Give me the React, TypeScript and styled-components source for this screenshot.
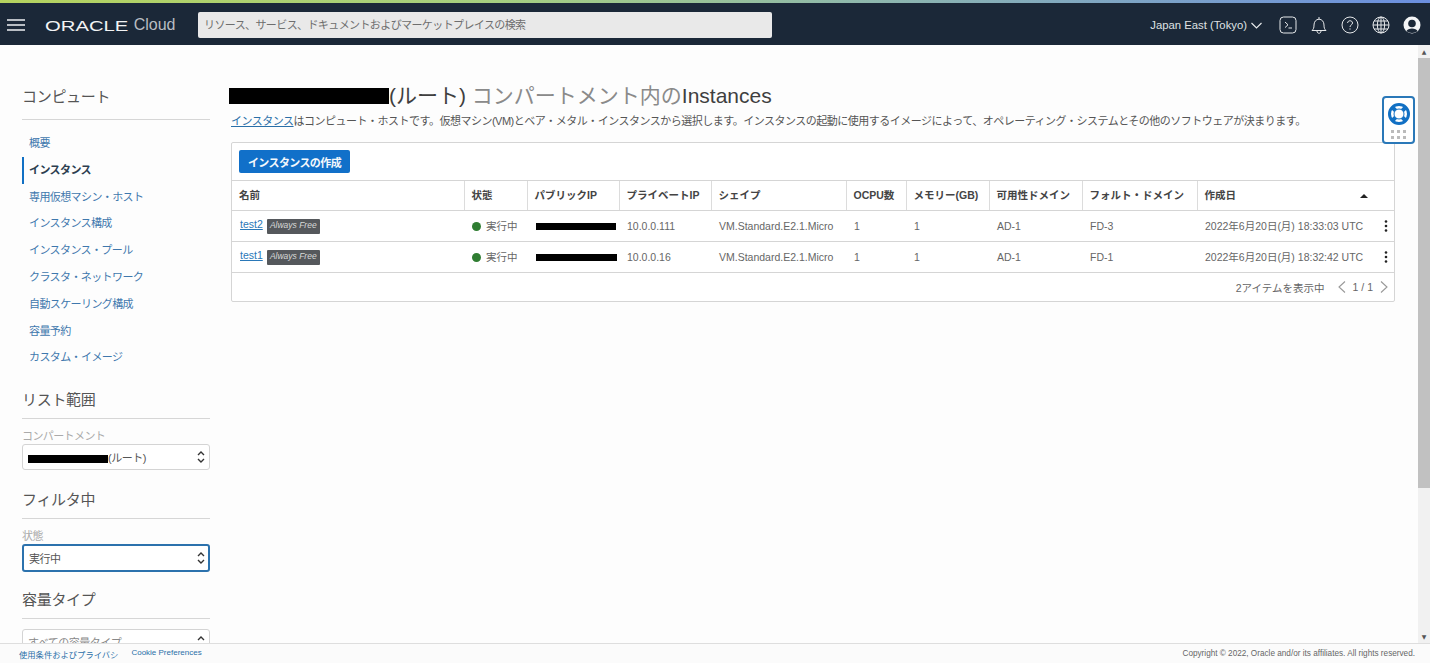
import {FC} from 'react';
import styled, {createGlobalStyle} from 'styled-components';

const FONT = `"Liberation Sans", "Noto Sans CJK JP", sans-serif`;

const navItems = [
  '概要',
  'インスタンス',
  '専用仮想マシン・ホスト',
  'インスタンス構成',
  'インスタンス・プール',
  'クラスタ・ネットワーク',
  '自動スケーリング構成',
  '容量予約',
  'カスタム・イメージ',
];

const columns = [
  {label: '名前', width: 232},
  {label: '状態', width: 63},
  {label: 'パブリックIP', width: 92},
  {label: 'プライベートIP', width: 92},
  {label: 'シェイプ', width: 135},
  {label: 'OCPU数', width: 60},
  {label: 'メモリー(GB)', width: 83},
  {label: '可用性ドメイン', width: 93},
  {label: 'フォルト・ドメイン', width: 115},
  {label: '作成日', width: 198},
];

const instances = [
  {name: 'test2', ip: '10.0.0.111', fd: 'FD-3', created: '2022年6月20日(月) 18:33:03 UTC', ipBar: 80},
  {name: 'test1', ip: '10.0.0.16', fd: 'FD-1', created: '2022年6月20日(月) 18:32:42 UTC', ipBar: 81},
];

const Chevrons: FC = () => (
  <svg width="8" height="14" viewBox="0 0 8 14" fill="none" stroke="#333" strokeWidth="1.4">
    <path d="M1 5l3-3 3 3M1 9l3 3 3-3" />
  </svg>
);

const App: FC = () => (
  <Page>
    <GlobalStyle />
    <Rainbow />
    <Header>
      <Burger viewBox="0 0 18 12" width="18" height="12">
        <path d="M0 1h18M0 6h18M0 11h18" stroke="#eef0f2" strokeWidth="1.6" />
      </Burger>
      <Logo>
        <LogoMark>ORACLE</LogoMark>
        <LogoCloud>Cloud</LogoCloud>
      </Logo>
      <Search>リソース、サービス、ドキュメントおよびマーケットプレイスの検索</Search>
      <HeaderRight>
        <Region>
          Japan East (Tokyo)
          <svg width="11" height="7" viewBox="0 0 11 7" fill="none" stroke="#e6e8ea" strokeWidth="1.2">
            <path d="M.5 1l5 5 5-5" />
          </svg>
        </Region>
        <HeaderIcons>
          <svg width="18" height="18" viewBox="0 0 18 18" fill="none" stroke="#e6e8ea" strokeWidth="1">
            <rect x="1" y="1" width="16" height="16" rx="3.5" />
            <path d="M6 6l3 2.8L6 11.6M9.5 12H13" />
          </svg>
          <svg width="18" height="18" viewBox="-1 0 18 18" fill="none" stroke="#e6e8ea" strokeWidth="1">
            <path d="M1 14.5c1.500-1.500 2-2.500 2-5.500 0-3.200 2-5.800 5-5.800s5 2.600 5 5.800c0 3 .5 4 2 5.500zM8 3.200V1M6 15c0 3 4 3 4 0" />
          </svg>
          <svg width="18" height="18" viewBox="0 0 18 18" fill="none" stroke="#e6e8ea" strokeWidth="1">
            <circle cx="9" cy="9" r="8" />
            <path d="M6.600 7c0-3 4.900-3 4.900 0 0 2-2.500 1.800-2.500 4" />
            <path d="M9 12.400v1.200" />
          </svg>
          <svg width="18" height="18" viewBox="0 0 18 18" fill="none" stroke="#e6e8ea" strokeWidth="1">
            <circle cx="9" cy="9" r="8" />
            <ellipse cx="9" cy="9" rx="3.6" ry="8" />
            <path d="M9 1v16M1 9h16M2 5h14M2 13h14" />
          </svg>
          <svg width="18" height="18" viewBox="0 0 18 18">
            <circle cx="9" cy="9" r="8.5" fill="#f4f5f6" />
            <circle cx="9" cy="7.5" r="3.8" fill="#1b2838" />
            <path d="M3.500 15c1-3.500 10-3.500 11 0-2 2.500-9 2.500-11 0z" fill="#1b2838" />
          </svg>
        </HeaderIcons>
      </HeaderRight>
    </Header>
    <Body>
      <Sidebar>
        <SideHeading $height={33}>コンピュート</SideHeading>
        <NavList>
          {navItems.map((item) => (
            <NavItem key={item} $active={item === 'インスタンス'}>
              {item}
            </NavItem>
          ))}
        </NavList>
        <SideHeading $gap={19}>リスト範囲</SideHeading>
        <FieldLabel>コンパートメント</FieldLabel>
        <SelectBox>
          <span>
            <SelectRedaction />
            (ルート)
          </span>
          <Chevrons />
        </SelectBox>
        <SideHeading $gap={20}>フィルタ中</SideHeading>
        <FieldLabel>状態</FieldLabel>
        <SelectBox $focused>
          <span>実行中</span>
          <Chevrons />
        </SelectBox>
        <SideHeading $gap={18}>容量タイプ</SideHeading>
        <SelectBox $gapTop={10} $muted>
          <span>すべての容量タイプ</span>
          <Chevrons />
        </SelectBox>
      </Sidebar>
      <Content>
        <Title>
          <TitleRedaction />
          <TitleDark>(ルート)</TitleDark> コンパートメント内の<TitleDark>Instances</TitleDark>
        </Title>
        <Intro>
          <IntroLink>インスタンス</IntroLink>
          はコンピュート・ホストです。仮想マシン(VM)とベア・メタル・インスタンスから選択します。インスタンスの起動に使用するイメージによって、オペレーティング・システムとその他のソフトウェアが決まります。
        </Intro>
        <Panel>
          <Toolbar>
            <CreateButton>インスタンスの作成</CreateButton>
          </Toolbar>
          <Table>
            <colgroup>
              {columns.map((col) => (
                <col key={col.label} width={col.width} />
              ))}
            </colgroup>
            <thead>
              <tr>
                {columns.map((col) => (
                  <Th key={col.label}>
                    {col.label}
                    {col.label === '作成日' && <SortArrow />}
                  </Th>
                ))}
              </tr>
            </thead>
            <tbody>
              {instances.map((row) => (
                <tr key={row.name}>
                  <Td>
                    <NameLink>{row.name}</NameLink>
                    <FreeBadge>Always Free</FreeBadge>
                  </Td>
                  <Td>
                    <StatusDot />
                    実行中
                  </Td>
                  <Td>
                    <IpRedaction style={{width: row.ipBar}} />
                  </Td>
                  <Td>{row.ip}</Td>
                  <Td>VM.Standard.E2.1.Micro</Td>
                  <Td>1</Td>
                  <Td>1</Td>
                  <Td>AD-1</Td>
                  <Td>{row.fd}</Td>
                  <DateCell>
                    {row.created}
                    <KebabIcon viewBox="0 0 4 12" width="4" height="12">
                      <circle cx="2" cy="1.5" r="1.3" />
                      <circle cx="2" cy="6" r="1.3" />
                      <circle cx="2" cy="10.5" r="1.3" />
                    </KebabIcon>
                  </DateCell>
                </tr>
              ))}
            </tbody>
          </Table>
          <Pager>
            <span>2アイテムを表示中</span>
            <svg width="8" height="12" viewBox="0 0 8 12" fill="none" stroke="#999" strokeWidth="1.1">
              <path d="M7 .5L1 6l6 5.500" />
            </svg>
            <span>1 / 1</span>
            <svg width="8" height="12" viewBox="0 0 8 12" fill="none" stroke="#999" strokeWidth="1.1">
              <path d="M1 .5L7 6l-6 5.500" />
            </svg>
          </Pager>
        </Panel>
      </Content>
      <HelpWidget>
        <svg width="24" height="24" viewBox="0 0 24 24" fill="none">
          <circle cx="12" cy="12" r="9.5" stroke="#1170c4" strokeWidth="3" />
          <path d="M5 5l4 4M19 5l-4 4M5 19l4-4M19 19l-4-4" stroke="#1170c4" strokeWidth="4" />
          <circle cx="12" cy="12" r="5" fill="#fff" stroke="#1170c4" strokeWidth="1" />
        </svg>
        <HelpDots>
          {Array.from({length: 6}).map((_, i) => (
            <i key={i} />
          ))}
        </HelpDots>
      </HelpWidget>
      <Scrollbar>
        <ScrollArrow>▲</ScrollArrow>
        <ScrollThumb />
        <ScrollArrow>▼</ScrollArrow>
      </Scrollbar>
    </Body>
    <Footer>
      <FooterLinks>
        <span>使用条件およびプライバシ</span>
        <CookieLink>Cookie Preferences</CookieLink>
      </FooterLinks>
      <Copyright>Copyright © 2022, Oracle and/or its affiliates. All rights reserved.</Copyright>
    </Footer>
  </Page>
);

const GlobalStyle = createGlobalStyle`
  html, body {
    margin: 0;
    height: 100%;
    overflow: hidden;
    background: #fcfcfc;
  }
  * { box-sizing: border-box; }
`;

const Page = styled.div`
  width: 1430px;
  height: 663px;
  display: flex;
  flex-direction: column;
  font-family: ${FONT};
  color: #444;
  overflow: hidden;
`;

const Rainbow = styled.div`
  height: 3px;
  flex: none;
  background: linear-gradient(90deg, #b5d35f 0%, #a6cf80 35%, #8fb8ac 60%, #6b8fe0 100%);
`;

const Header = styled.header`
  height: 42px;
  flex: none;
  display: flex;
  align-items: center;
  background: #1b2838;
  padding: 2px 9px 0 7px;
`;

const Burger = styled.svg`
  flex: none;
  margin-right: 20px;
`;

const Logo = styled.div`
  width: 153px;
  display: flex;
  align-items: center;
  gap: 5px;
  flex: none;
`;

const LogoMark = styled.span`
  font-size: 15px;
  color: #f2f3f4;
  transform: scaleX(1.35);
  transform-origin: left center;
  margin-right: 22px;
`;

const LogoCloud = styled.span`
  font-size: 16px;
  color: #b9bdc2;
`;

const Search = styled.div`
  width: 574px;
  height: 26px;
  flex: none;
  background: #e9e9e9;
  border-radius: 2px;
  padding: 0 6px;
  font-size: 11px;
  letter-spacing: -0.6px;
  line-height: 26px;
  color: #6e6e6e;
`;

const HeaderRight = styled.div`
  margin-left: auto;
  display: flex;
  align-items: center;
  gap: 17px;
`;

const Region = styled.div`
  display: flex;
  align-items: center;
  gap: 4px;
  font-size: 11.3px;
  color: #dfe1e3;
`;

const HeaderIcons = styled.div`
  display: flex;
  align-items: center;
  gap: 13px;
`;

const Body = styled.div`
  position: relative;
  flex: 1;
  min-height: 0;
  display: flex;
  overflow: hidden;
  background: #fdfdfd;
`;

const Sidebar = styled.aside`
  width: 231px;
  flex: none;
  padding: 42px 21px 0 22px;
`;

const SideHeading = styled.h3<{$gap?: number; $height?: number}>`
  margin: ${({$gap}) => $gap ?? 0}px 0 0;
  height: ${({$height}) => $height ?? 29}px;
  font-size: 15px;
  letter-spacing: -0.3px;
  line-height: 20px;
  font-weight: 400;
  color: #555;
  border-bottom: 1px solid #d6d6d6;
`;

const NavList = styled.ul`
  list-style: none;
  margin: 10px 0 0;
  padding: 0;
`;

const NavItem = styled.li<{$active?: boolean}>`
  height: 26.8px;
  line-height: 26.8px;
  padding-left: ${({$active}) => ($active ? 5 : 7)}px;
  font-size: 11px;
  letter-spacing: -0.6px;
  color: ${({$active}) => ($active ? '#2c3e50' : '#3f78ad')};
  font-weight: ${({$active}) => ($active ? 700 : 400)};
  border-left: ${({$active}) => ($active ? '2px solid #1170c4' : 'none')};
`;

const FieldLabel = styled.div`
  margin-top: 10px;
  font-size: 11px;
  letter-spacing: -0.6px;
  line-height: 15px;
  color: #aaa;
`;

const SelectBox = styled.div<{$focused?: boolean; $muted?: boolean; $gapTop?: number}>`
  margin-top: ${({$gapTop}) => $gapTop ?? 0}px;
  height: ${({$focused}) => ($focused ? 28 : 26)}px;
  display: flex;
  align-items: center;
  justify-content: space-between;
  padding: 0 ${({$focused}) => ($focused ? 3 : 4)}px 0 5px;
  font-size: 11px;
  letter-spacing: -0.5px;
  color: ${({$muted}) => ($muted ? '#888' : '#555')};
  background: #fff;
  border-radius: 3px;
  border: ${({$focused}) => ($focused ? '2px solid #2c72ad' : '1px solid #d4d4d4')};
`;

const SelectRedaction = styled.i`
  display: inline-block;
  width: 80px;
  height: 8px;
  background: #000;
  vertical-align: -1px;
`;

const Content = styled.main`
  flex: 1;
  min-width: 0;
  padding-top: 38px;
`;

const Title = styled.h1`
  margin: 0;
  height: 26px;
  font-size: 21px;
  line-height: 26px;
  font-weight: 400;
  color: #8a8a8a;
  white-space: nowrap;
`;

const TitleRedaction = styled.i`
  display: inline-block;
  width: 160px;
  height: 16px;
  margin-left: -2px;
  background: #000;
  vertical-align: -1px;
`;

const TitleDark = styled.span`
  color: #3f3f3f;
`;

const Intro = styled.p`
  margin: 4px 0 0;
  font-size: 11px;
  letter-spacing: -0.5px;
  line-height: 16px;
  color: #555;
  white-space: nowrap;
`;

const IntroLink = styled.a`
  color: #2a6fa8;
  text-decoration: underline;
`;

const Panel = styled.section`
  width: 1164px;
  margin-top: 13px;
  background: #fff;
  border: 1px solid #d5d5d5;
  border-radius: 2px;
`;

const Toolbar = styled.div`
  height: 37px;
  padding: 7px 7px 0;
`;

const CreateButton = styled.button`
  height: 23px;
  width: 111px;
  padding: 0;
  border: none;
  border-radius: 2px;
  background: #1170c9;
  color: #f4f8fc;
  font-family: ${FONT};
  font-size: 11px;
  letter-spacing: -0.6px;
  font-weight: 700;
`;

const Table = styled.table`
  width: 1163px;
  table-layout: fixed;
  border-collapse: collapse;
`;

const Th = styled.th`
  position: relative;
  height: 30px;
  padding: 0 0 2px 7px;
  text-align: left;
  font-size: 10.5px;
  font-weight: 700;
  white-space: nowrap;
  color: #444;
  border-top: 1px solid #d5d5d5;
  border-bottom: 1px solid #d5d5d5;
  & + & {
    border-left: 1px solid #dcdcdc;
  }
`;

const SortArrow = styled.i`
  position: absolute;
  right: 27px;
  top: 13px;
  border-left: 4px solid transparent;
  border-right: 4px solid transparent;
  border-bottom: 4px solid #222;
`;

const Td = styled.td`
  height: 31px;
  padding: 0 0 1px 8px;
  font-size: 10.5px;
  color: #666;
  white-space: nowrap;
  border-bottom: 1px solid #d5d5d5;
`;

const DateCell = styled(Td)`
  position: relative;
`;

const KebabIcon = styled.svg`
  position: absolute;
  right: 7px;
  top: 9px;
  fill: #222;
`;

const NameLink = styled.a`
  font-size: 10.5px;
  color: #2a78b8;
  text-decoration: underline;
`;

const FreeBadge = styled.span`
  display: inline-block;
  margin-left: 4px;
  width: 53px;
  height: 15px;
  line-height: 13px;
  text-align: center;
  font-size: 8.5px;
  font-style: italic;
  color: #d8d8d8;
  background: #55585c;
  border-radius: 1px;
`;

const StatusDot = styled.i`
  display: inline-block;
  width: 9px;
  height: 9px;
  margin-right: 5px;
  border-radius: 50%;
  background: #2f7d32;
  vertical-align: -1px;
`;

const IpRedaction = styled.i`
  display: inline-block;
  height: 7px;
  margin-left: 1px;
  background: #000;
  vertical-align: middle;
`;

const Pager = styled.div`
  height: 28px;
  display: flex;
  align-items: center;
  justify-content: flex-end;
  gap: 7px;
  padding-right: 6px;
  font-size: 10.5px;
  color: #666;

  & > span:first-child {
    margin-right: 6px;
  }
`;

const HelpWidget = styled.div`
  position: absolute;
  left: 1382px;
  top: 51px;
  width: 33px;
  height: 48px;
  display: flex;
  flex-direction: column;
  align-items: center;
  gap: 4px;
  padding-top: 4px;
  background: #fff;
  border: 2px solid #2a78b8;
  border-radius: 4px;
`;

const HelpDots = styled.div`
  display: grid;
  grid-template-columns: repeat(3, 3px);
  gap: 2.5px 3px;

  & > i {
    width: 3px;
    height: 3px;
    background: #bbb;
  }
`;

const Scrollbar = styled.div`
  width: 12px;
  flex: none;
  display: flex;
  flex-direction: column;
  background: #f1f1f1;
`;

const ScrollArrow = styled.div`
  height: 13px;
  flex: none;
  text-align: center;
  font-size: 6px;
  line-height: 13px;
  color: #555;
  font-family: "DejaVu Sans", sans-serif;

  &:last-child {
    margin-top: auto;
  }
`;

const ScrollThumb = styled.div`
  height: 430px;
  flex: none;
  background: #c1c1c1;
`;

const Footer = styled.footer`
  position: relative;
  height: 20px;
  flex: none;
  display: flex;
  align-items: center;
  justify-content: space-between;
  padding: 0 15px 0 19px;
  background: #fbfbfb;
  border-top: 1px solid #dedede;
`;

const FooterLinks = styled.div`
  display: flex;
  gap: 13px;
  font-size: 8.3px;
  color: #2a6fa8;
`;

const CookieLink = styled.span`
  font-size: 8px;
`;

const Copyright = styled.div`
  font-size: 8.2px;
  color: #666;
`;

export default App;
